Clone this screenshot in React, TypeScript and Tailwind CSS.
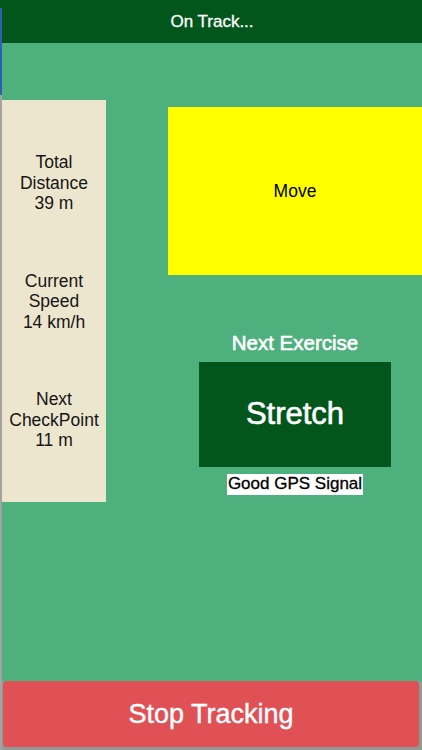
export default function App() {
  const stats = [
    ["Total", "Distance", "39 m"],
    ["Current", "Speed", "14 km/h"],
    ["Next", "CheckPoint", "11 m"],
  ];

  return (
    <div className="flex h-[750px] w-[422px] overflow-hidden bg-[#4db07d] font-['Liberation_Sans',Arial,sans-serif]">
      {/* left edge strip */}
      <div className="flex w-[2px] flex-col">
        <div className="h-[8px] bg-[#03561b]" />
        <div className="h-[87px] bg-[#2f5fae]" />
        <div className="flex-1 bg-[#a3a3a3]" />
      </div>

      <div className="flex flex-1 flex-col">
        {/* header */}
        <div className="flex h-[43px] items-center justify-center bg-[#03561b] text-[17px] text-white [-webkit-text-stroke:0.3px_white]">
          On Track...
        </div>

        {/* main */}
        <div className="flex flex-1 items-start">
          <div className="mt-[57px] flex h-[402px] w-[104px] flex-col items-center gap-[57px] bg-[#ede6cf] pt-[52px] text-center text-[17.5px] leading-[20.5px] text-[#151515]">
            {stats.map((s) => (
              <div key={s[1]} className="flex flex-col items-center">
                {s.map((line) => (
                  <span key={line}>{line}</span>
                ))}
              </div>
            ))}
          </div>

          <div className="ml-[62px] mt-[64px] flex flex-1 flex-col items-center">
            <div className="flex h-[168px] self-stretch items-center justify-center bg-[#ffff00] text-[17.5px] text-black">
              Move
            </div>
            <div className="mt-[56px] text-[20.5px] leading-[24px] text-white [-webkit-text-stroke:0.6px_white]">
              Next Exercise
            </div>
            <div className="mt-[7px] flex h-[105px] w-[192px] items-center justify-center bg-[#03561b] text-[31px] text-white [-webkit-text-stroke:0.6px_white]">
              Stretch
            </div>
            <div className="mt-[7px] bg-white px-[1px] text-[17px] leading-[20.5px] text-black [-webkit-text-stroke:0.3px_black]">
              Good GPS Signal
            </div>
          </div>
        </div>

        {/* footer */}
        <div className="h-[69px] bg-[#8f9a94] pb-[3px] pl-[1px] pr-[3px]">
          <button className="flex h-[66px] w-full items-center justify-center rounded-[4px] bg-[#e05155] text-[27px] text-white [-webkit-text-stroke:0.4px_white]">
            Stop Tracking
          </button>
        </div>
      </div>
    </div>
  );
}
